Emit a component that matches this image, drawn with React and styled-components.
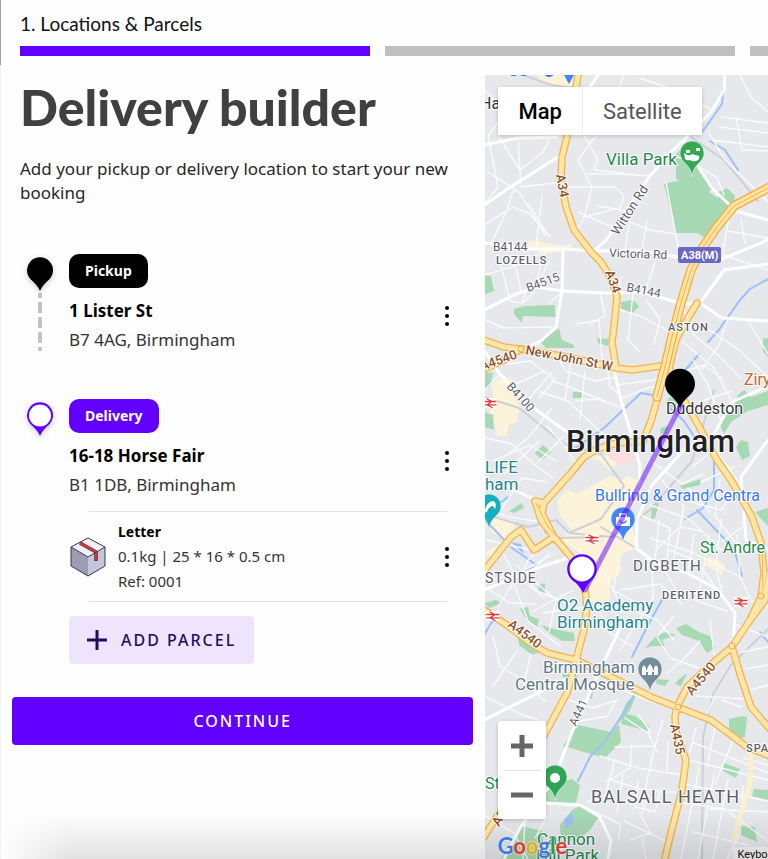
import React, { useState } from "react";
import styled, { createGlobalStyle } from "styled-components";

const GlobalStyle = createGlobalStyle`
    * {
        box-sizing: border-box;
    }
    body {
        margin: 0;
        background: #fefefe;
        color: #101010;
        font-family: "Noto Sans", "Open Sans", sans-serif;
        overflow-x: hidden;
    }
    button {
        font: inherit;
        cursor: pointer;
        border: 0;
    }
    h1, h2, h3, p, ul, ol {
        margin: 0;
        padding: 0;
    }
`;

const roads = {
    // drawn wide, with an orange casing
    primary: [
        "M579 70 L573 105 L567 137 L562 157 L561 180 L566 207 L574 230 L591 252 L601 262 L612 280 L617 297 L614 327 L612 342 L616 368 L632 370 L661 366",
        "M484 340 L504 347 L521 349 L567 357 L616 368",
        "M484 369 L502 361 L521 349",
        "M697 303 L685 323 L676 340 L669 368 L684 400 L701 430 L717 460 L731 480 L752 517 L761 543 L764 573 L761 597 L750 620 L732 647 L714 662 L687 687 L677 707",
        "M658 397 L651 421 L643 441 L617 443 L597 449 L584 457 L571 473 L544 503 L535 501 L541 520 L554 537 L571 557 L584 580 L587 607 L584 630 L576 660 L567 693 L547 730 L520 780 L484 837",
        "M544 503 L542 514 L554 537 L534 550 L521 530 L511 537 L484 571",
        "M484 610 L507 625 L529 642 L547 653 L576 660 L607 675 L651 697 L677 707 L711 720 L747 747 L770 756",
        "M732 647 L741 677 L751 707 L770 729",
        "M677 707 L675 717 L676 732 L686 760 L682 790 L671 833 L664 862",
        "M770 573 L765 600 L748 623 L732 647",
    ],
    motorway: [
        "M770 187 L751 197 L734 206 L717 227 L701 250 L691 270 L681 303 L672 337 L665 367 L657 397",
    ],
    secondary: [
        "M600 72 L588 90 L569 106",
        "M725 72 L724 90 L712 111 L684 140 L669 154 L650 176 L624 214 L607 239 L594 251 L566 249 L526 249 L486 243",
        "M684 140 L697 165 L712 188 L736 211 L768 220",
        "M594 251 L636 250 L683 258 L720 260 L768 240",
        "M768 264 L724 270 L700 303 L722 318 L768 321",
        "M484 310 L514 295 L536 287 L562 291 L563 249",
        "M562 291 L605 293 L641 292 L683 304 L698 303",
        "M562 291 L556 327 L541 341 L523 349",
        "M484 350 L499 373 L524 401 L568 433",
        "M614 370 L621 400 L630 430 L640 466 L639 486",
        "M768 386 L732 402 L714 434 L684 450 L652 485 L637 520 L636 548 L654 562 L689 574 L717 589 L735 613 L733 650",
        "M768 440 L741 477 L746 540 L768 549",
        "M620 628 L592 688 L573 730 L553 781 L520 828 L504 859",
        "M484 720 L516 704 L572 676",
        "M545 803 L580 805 L600 817 L611 841 L608 859",
        "M484 590 L537 568 L571 557",
        "M484 490 L506 486 L536 500",
        "M484 205 L512 186 L558 157",
        "M484 145 L518 138 L557 137",
    ],
    minor: [
        "M485 90 L505 113 L488 136 L498 187 L485 203",
        "M518 138 L521 187 L556 183 M488 172 L520 193 L545 235",
        "M499 137 L520 170 L543 152 L552 133 M514 188 L507 210 L492 242",
        "M584 135 L598 160 L594 170 L623 173 M595 137 L578 160 L592 187 L584 218",
        "M569 187 L615 187 L624 196 L620 208 L583 217 M588 174 L624 174 L650 176",
        "M624 72 L616 101 L631 111 L653 112 M639 78 L681 92 L712 110",
        "M722 117 L768 123 M719 127 L768 133 M712 140 L768 147 M736 116 L742 150 L768 151",
        "M738 72 L752 98 L768 112 M709 133 L725 160 L768 202 M665 154 L689 160 L717 178 L724 195",
        "M484 225 L513 207 L530 214 L550 237 M528 203 L548 235 M542 195 L536 249",
        "M578 212 L612 227 L608 238 M584 220 L574 231 M627 221 L650 230 L676 234",
        "M630 217 L625 251 M647 221 L642 251 M666 182 L678 247 M597 206 L605 207 L626 211",
        "M730 211 L722 258 M741 219 L745 244 M703 248 L768 270 M727 231 L768 238",
        "M501 265 L510 301 L522 303 L527 287 M515 262 L521 291 M545 251 L535 286",
        "M484 275 L512 267 L542 253 M549 262 L536 286 M484 319 L503 328 L552 327",
        "M524 302 L534 293 M549 303 L565 290 M600 292 L605 315 L589 325 M576 324 L599 320 L603 368",
        "M621 277 L618 296 M633 294 L628 340 L640 352 M646 300 L660 319 L654 345 M618 309 L640 316 L667 330",
        "M655 262 L647 286 L650 294 M682 304 L693 334 L718 355 L742 379 M700 323 L740 351 L768 377",
        "M727 321 L719 345 L702 369 M748 321 L768 354 M683 342 L714 368 L731 400",
        "M553 350 L566 371 L596 381 L615 377 M571 360 L565 401 M585 371 L580 420 M551 380 L605 401",
        "M508 364 L530 361 L555 379 L540 397 M511 386 L545 371 M499 375 L485 390",
        "M540 392 L568 401 L606 437 M526 402 L552 372 M576 401 L597 399 L620 407",
        "M617 385 L660 379 M622 398 L650 387 L665 388 M607 368 L610 386 L620 395",
        "M693 360 L708 385 L721 421 M680 373 L704 365 L723 379 M699 402 L732 391",
        "M485 438 L512 444 L535 465 L553 478 M493 461 L530 445 L556 461 M504 474 L539 441",
        "M547 426 L567 449 L576 464 M552 408 L528 438 L504 457 M564 436 L539 461",
        "M485 510 L510 517 L547 523 M501 510 L522 478 L546 482 M550 540 L528 560 L520 580",
        "M486 540 L508 545 L527 549 M500 548 L514 573 L544 598 M516 565 L556 600 L549 632",
        "M550 553 L527 575 L535 590 L561 601 M484 582 L519 573 L550 556 M573 590 L533 611",
        "M514 584 L528 621 L560 646 M488 589 L510 603 L535 604 M498 607 L515 580 M543 613 L585 607",
        "M648 459 L682 484 L703 474 M662 480 L684 507 L676 548 M680 499 L721 510 L743 481",
        "M692 467 L715 449 L742 487 M701 482 L734 467 M688 488 L710 512 M720 479 L715 516 L738 546",
        "M642 516 L670 528 L667 564 M650 505 L689 519 L725 553 M656 550 L680 527 L701 531",
        "M679 533 L672 568 M694 534 L688 572 M709 535 L702 577 M650 538 L694 553 L740 577",
        "M659 520 L655 562 M670 550 L696 561 L725 600 M721 519 L716 568 L722 592 M745 525 L723 541",
        "M737 535 L740 577 L752 602 M703 578 L695 600 L727 611 M620 559 L613 590 L644 607",
        "M604 571 L622 609 M620 590 L660 584 L682 604 M596 603 L610 633 L633 647",
        "M652 566 L653 598 L635 625 L620 651 M665 571 L677 591 L710 595 M637 612 L657 620 L674 640",
        "M673 617 L657 637 L670 658 L699 668 M700 641 L682 661 L667 673 M710 620 L714 654",
        "M737 625 L768 637 M742 652 L768 647 M746 669 L768 665 M751 690 L768 685 M754 601 L768 607",
        "M493 636 L500 666 L524 681 M517 651 L493 686 M531 654 L524 682 L546 702 M485 696 L520 714 L549 724",
        "M605 684 L622 690 L655 703 M616 700 L608 716 L575 722 M566 699 L592 708 L618 700",
        "M625 718 L648 733 L658 753 M639 715 L651 733 M663 720 L655 746 L615 747",
        "M600 756 L638 768 L682 775 M632 742 L630 768 L606 782 M615 760 L604 799 L586 802",
        "M654 749 L642 805 M668 741 L667 773 M688 760 L725 769 L768 780 M684 784 L768 801",
        "M696 728 L690 752 M715 727 L707 767 M733 741 L715 784 M743 758 L768 765",
        "M692 742 L768 773 M706 716 L714 698 M722 700 L741 707 M696 696 L746 699",
        "M608 779 L640 789 L681 793 M623 775 L617 813 M638 780 L635 807 L653 811 M585 807 L620 824 L619 841",
        "M648 795 L641 816 L650 832 M660 793 L655 812 M679 802 L725 809 L768 841 M624 821 L668 842",
        "M699 768 L681 859 M714 775 L698 859 M728 779 L713 859 M743 786 L740 833 L727 859",
        "M710 809 L768 812 M693 832 L748 845 M630 840 L653 832 M642 839 L646 859 M525 819 L523 859",
        "M522 752 L552 771 M484 815 L514 833 L528 859 M535 838 L547 817",
    ],
    rail: [
        "M514 72 L552 85 L620 94",
        "M484 397 L519 408 L564 444 L601 454 L624 486 L601 519 L569 533 L556 520 L528 527 L484 514",
        "M601 527 L639 550 M569 533 L612 537 L650 510 L692 461 L714 390",
        "M545 532 L560 538 L600 537",
        "M688 135 L724 160 L758 201",
        "M768 629 L731 665 L713 694 L703 737 L702 859",
    ],
    water: [
        "M725 73 L722 104 L703 131",
        "M710 141 L725 150 L738 170",
        "M768 279 L750 289 L740 300 L718 331 L708 342 M699 354 L682 374",
        "M658 396 L641 393 L623 410 L604 428 L577 447",
        "M668 406 L684 421 L695 438",
        "M484 519 L512 548 L538 566 L514 576",
        "M492 509 L508 497 M714 457 L714 490 L703 508 L685 519 M697 510 L734 549 L742 576",
        "M663 598 L648 625 L632 657 M760 632 L768 642",
        "M634 695 L621 717 L605 741 L590 757 L578 781",
        "M484 635 L493 620",
    ],
};

const parks = [
    "M664 184 L681 180 L700 186 L712 194 L734 208 L717 228 L707 239 L697 233 L676 233 Z",
    "M676 154 L686 145 L697 166 L714 188 L708 192 L676 179 Z",
    "M718 192 L727 188 L735 196 L734 205 L719 202 Z",
    "M514 309 L525 306 L555 305 L555 317 L523 316 L522 323 L514 314 Z",
    "M484 275 L491 276 L494 291 L484 295 Z",
    "M621 302 L633 300 L639 306 L632 314 L621 309 Z",
    "M559 328 L562 340 L574 345 L574 348 L546 348 L540 342 Z",
    "M597 338 L608 339 L608 346 L598 343 Z",
    "M573 392 L583 391 L583 398 L573 398 Z",
    "M535 453 L543 445 L551 452 L542 460 Z",
    "M484 372 L493 373 L490 387 L484 391 Z M484 412 L493 415 L494 430 L484 427 Z",
    "M670 397 L681 401 L683 413 L665 403 Z M661 428 L668 426 L667 439 L660 433 Z",
    "M738 395 L744 390 L751 397 L768 391 L768 405 L748 411 L731 422 L724 434 L720 425 L726 412 L732 411 Z",
    "M763 339 L768 338 L768 357 L763 351 Z",
    "M680 486 L701 479 L700 485 L683 489 Z M652 504 L659 503 L655 518 L651 519 Z",
    "M736 447 L741 440 L748 442 L750 456 L742 460 Z",
    "M755 512 L768 508 L768 526 Z",
    "M509 511 L522 503 L524 508 L514 513 Z M538 585 L545 583 L545 593 L539 591 Z",
    "M520 609 L528 607 L530 616 L539 619 L537 627 L526 619 Z",
    "M541 625 L558 630 L574 633 L575 641 L562 641 L549 633 Z",
    "M517 630 L530 644 L542 651 L532 655 L519 645 Z",
    "M645 648 L657 635 L666 632 L676 635 L662 640 L665 646 L653 646 Z",
    "M676 628 L686 624 L699 632 L710 636 L715 648 L707 653 L699 641 L682 635 Z",
    "M655 679 L669 680 L665 686 L657 684 Z M678 680 L687 673 L681 686 L675 684 Z",
    "M578 725 L611 732 L619 724 L621 742 L605 758 L563 746 Z",
    "M624 713 L635 716 L649 726 L648 731 L621 724 Z",
    "M626 703 L637 693 L630 710 L618 724 Z",
    "M729 719 L742 716 L747 717 L745 737 L737 739 L729 729 Z",
    "M724 763 L740 769 L736 778 L723 771 Z",
    "M545 785 L572 779 L580 785 L576 803 L545 802 Z",
    "M572 810 L580 806 L600 815 L590 830 L576 841 L561 839 L560 825 Z",
    "M522 826 L542 831 L545 859 L501 859 Z",
    "M754 789 L768 790 L768 800 L752 796 Z M738 826 L755 827 L757 842 L741 835 Z",
    "M562 674 L578 676 L577 680 L564 679 Z M586 696 L593 692 L592 699 Z",
    "M484 603 L496 600 L502 603 L489 608 Z",
];

const builtUp = [
    "M539 75 L575 75 L571 88 L551 86 L538 80 Z",
    "M529 240 L563 246 L574 242 L569 250 L546 254 L528 248 Z",
    "M504 375 L515 382 L513 393 L520 407 L516 423 L509 424 L507 436 L497 436 L495 424 L487 419 L494 400 L491 386 Z",
    "M610 476 L622 481 L628 475 L637 480 L635 504 L628 510 L634 535 L640 547 L623 553 L618 562 L622 571 L610 582 L610 601 L587 602 L590 583 L580 553 L562 540 L571 529 L560 515 L557 502 L567 489 L577 494 Z",
    "M488 515 L516 521 L509 541 L491 532 Z M484 553 L497 545 L492 558 Z",
    "M710 556 L725 565 L722 575 L704 564 Z",
    "M591 457 L610 455 L622 461 L609 470 L601 462 Z",
];

const labels = [
    { text: "Villa Park", x: 606, y: 165, size: 17, color: "#23864a" },
    { text: "B4144", x: 493, y: 251, size: 12 },
    { text: "LOZELLS", x: 496, y: 264, size: 11, space: 1, bold: true },
    { text: "B4515", x: 528, y: 292, size: 12, turn: -20 },
    { text: "A34", x: 556, y: 175, size: 13, turn: 80, bold: true, color: "#8a542c" },
    { text: "A34", x: 605, y: 272, size: 13, turn: 70, bold: true, color: "#8a542c" },
    { text: "B4144", x: 626, y: 291, size: 12, turn: 11 },
    { text: "Witton Rd", x: 618, y: 236, size: 13, turn: -57 },
    { text: "Victoria Rd", x: 609, y: 257, size: 12, turn: 2 },
    { text: "ASTON", x: 668, y: 331, size: 11, space: 1, bold: true },
    { text: "New John St W", x: 525, y: 354, size: 13, turn: 11, bold: true, color: "#8a542c" },
    { text: "A4540", x: 482, y: 371, size: 13, turn: -20, bold: true, color: "#8a542c" },
    { text: "B4100", x: 506, y: 387, size: 12, turn: 48 },
    { text: "Ziry", x: 744, y: 385, size: 16, color: "#c6651d" },
    { text: "Duddeston", x: 666, y: 414, size: 16, color: "#333" },
    { text: "LIFE", x: 485, y: 473, size: 17, color: "#24838c" },
    { text: "ham", x: 485, y: 490, size: 17, color: "#24838c" },
    { text: "Bullring & Grand Centra", x: 595, y: 501, size: 16, color: "#3b78e7" },
    { text: "St. Andre", x: 700, y: 553, size: 16, color: "#23864a" },
    { text: "DIGBETH", x: 633, y: 571, size: 15, space: 1 },
    { text: "STSIDE", x: 485, y: 583, size: 14, space: 1 },
    { text: "DERITEND", x: 662, y: 599, size: 11, space: 1, bold: true },
    { text: "O2 Academy", x: 557, y: 611, size: 17, color: "#24838c" },
    { text: "Birmingham", x: 557, y: 628, size: 17, color: "#24838c" },
    { text: "A4540", x: 507, y: 626, size: 13, turn: 37, bold: true, color: "#8a542c" },
    { text: "Birmingham", x: 543, y: 673, size: 17, color: "#607886" },
    { text: "Central Mosque", x: 515, y: 690, size: 17, color: "#607886" },
    { text: "A4540", x: 692, y: 696, size: 13, turn: -50, bold: true, color: "#8a542c" },
    { text: "A441", x: 576, y: 727, size: 12, turn: -65 },
    { text: "A435", x: 670, y: 725, size: 13, turn: 78, bold: true, color: "#8a542c" },
    { text: "SPA", x: 746, y: 752, size: 11, space: 1, bold: true },
    { text: "Sta", x: 485, y: 789, size: 16, color: "#23864a" },
    { text: "A38", x: 499, y: 827, size: 13, turn: -60, bold: true, color: "#8a542c" },
    { text: "BALSALL HEATH", x: 591, y: 803, size: 18, space: 1 },
    { text: "Cannon", x: 537, y: 845, size: 17, color: "#23864a" },
    { text: "Hill Park", x: 536, y: 861, size: 17, color: "#23864a" },
    { text: "Ha", x: 480, y: 109, size: 16, color: "#333" },
];

function RailSign({ x, y }) {
    return (
        <g transform={`translate(${x} ${y})`}>
            <rect x="-7" y="-5" width="14" height="10" rx="1" fill="#fff" />
            <path
                d="M-6 -1.5H6M-6 1.8H6M-3 -4L2 -1.5L-3 1.8L2 4.5"
                fill="none"
                stroke="#df3a3a"
                strokeWidth="1.3"
            />
        </g>
    );
}

function PlacePin({ x, y, color, children }) {
    return (
        <g transform={`translate(${x} ${y})`}>
            <path
                d="M0 22C-1 15 -4 12 -8 8C-11 5 -12 2 -12 -1A12 12 0 0 1 12 -1C12 2 11 5 8 8C4 12 1 15 0 22Z"
                fill={color}
                stroke="#fff"
                strokeOpacity="0.5"
            />
            {children}
        </g>
    );
}

function MapDrawing() {
    return (
        <MapSvg role="img" aria-label="Map of Birmingham">
            <g
                transform="translate(-485 -75)"
                fill="none"
                strokeLinejoin="round"
                strokeLinecap="round"
            >
                <path d={builtUp.join(" ")} fill="#fcf3d8" />
                <path d="M604 446 L636 446 L637 456 L624 467 L610 459 Z" fill="#f8dfdd" />
                <path d={parks.join(" ")} fill="#a7d9b5" />
                <path d={roads.rail.join(" ")} stroke="#cdd0d5" strokeWidth="2" />
                <path d={roads.water.join(" ")} stroke="#9cc0f9" strokeWidth="2" />
                <path
                    d="M572 813 L574 822 L566 828 L564 820 Z M511 542 L521 544 L524 554 Z"
                    fill="#9cc0f9"
                />
                <path
                    d={roads.minor.join(" ")}
                    stroke="#f9fafb"
                    strokeWidth="1.4"
                />
                <path
                    d={roads.secondary.join(" ")}
                    stroke="#fff"
                    strokeWidth="3"
                />
                <path d="M751 752 L750 783 L734 838" stroke="#fcf0cd" strokeWidth="5" />
                <path d={roads.primary.join(" ")} stroke="#f4b44c" strokeWidth="7.6" />
                <path d={roads.primary.join(" ")} stroke="#fee6ab" strokeWidth="5" />
                <path d={roads.motorway[0]} stroke="#f2ac3f" strokeWidth="9.500" />
                <path d={roads.motorway[0]} stroke="#fee3a3" strokeWidth="7" />
                <path d={roads.motorway[0]} stroke="#f4b44c" strokeWidth="1" />
                <path d="M536 503 L548 527 L562 541 M762 545 L763 590" stroke="#f4b44c" />
                {[
                    [521, 349],
                    [678, 707],
                    [732, 646],
                    [761, 596],
                ].map(([cx, cy]) => (
                    <circle
                        key={cx}
                        cx={cx}
                        cy={cy}
                        r="3"
                        fill="#fee6ab"
                        stroke="#f0ac42"
                    />
                ))}

                <RailSign x={490} y={403} />
                <RailSign x={592} y={539} />
                <RailSign x={741} y={602} />
                <RailSign x={493} y={616} />

                <rect x="678" y="247" width="43" height="16" rx="2" fill="#6a68c6" />
                <Badge x="681" y="259">A38(M)</Badge>
                {labels.map((l) => (
                    <MapLabel
                        key={`${l.text}${l.x}`}
                        $size={l.size}
                        $color={l.color}
                        $space={l.space}
                        $bold={l.bold}
                        transform={`translate(${l.x} ${l.y}) rotate(${l.turn || 0})`}
                    >
                        {l.text}
                    </MapLabel>
                ))}
                <MapLabel
                    $size={31}
                    $color="#202124"
                    $bold
                    transform="translate(566 452)"
                >
                    Birmingham
                </MapLabel>
                <path d="M564 75h10l-5 9z" fill="#4285f4" />
                <path
                    d="M512 75h3M522 75h3M546 75q3 2 6 0"
                    stroke="#3b78e7"
                    strokeWidth="2"
                />

                <PlacePin x={692} y={154} color="#34a853">
                    <path
                        d="M-8 -1q5 4 8 1l7 2q1 4 -3 5q-4 1 -6 -1q-4 1 -5 -1zM-6 -4h4v3h-4zM4 -6h4v3h-4z"
                        fill="#fff"
                    />
                </PlacePin>
                <PlacePin x={623} y={520} color="#4285f4">
                    <path d="M-7 -3H7V6H-7Z" fill="#fff" />
                    <path d="M-3 -2V-6H3V-2" stroke="#fff" strokeWidth="2" />
                    <path d="M-3 1Q0 5 3 1" stroke="#4285f4" strokeWidth="1.5" />
                </PlacePin>
                <PlacePin x={489} y={507} color="#14b0bd">
                    <path
                        d="M-4 3Q-2 -6 5 -6Q8 -3 6 2L4 -1Q0 -1 -2 5L-6 6Z"
                        fill="#fff"
                    />
                </PlacePin>
                <PlacePin x={650} y={670} color="#728c9a">
                    <path
                        d="M-8 5V-2l2-3 2 3V0H-3Q-3 -3 0 -6Q3 -3 3 0H4V-2l2-3 2 3V5H4V2H2V5H-2V2H-4V5Z"
                        fill="#fff"
                    />
                </PlacePin>
                <PlacePin x={555} y={778} color="#2fa455">
                    <circle cx="0" cy="0" r="5" fill="#fff" />
                </PlacePin>

                <path
                    d="M681 405 L585 590"
                    stroke="#6200ff"
                    strokeOpacity="0.5"
                    strokeWidth="5"
                />
                <path
                    d="M680 408Q678 402 670 395A15 15 0 1 1 690 395Q682 402 680 408Z"
                    fill="#000"
                />
                <path d="M570 577Q580 586 583 593Q586 586 594 577Z" fill="#6200ff" />
                <circle
                    cx="582"
                    cy="569"
                    r="13.6"
                    fill="#fff"
                    stroke="#6200ff"
                    strokeWidth="2.4"
                />
            </g>
        </MapSvg>
    );
}

function StopPin({ outlined }) {
    return (
        <Pin width="30" height="37" viewBox="0 0 30 37" aria-hidden="true">
            <path
                d="M15 35Q13 30 7 24.500A13 13 0 1 1 23 24.500Q17 30 15 35Z"
                fill={outlined ? "#6200ff" : "#000"}
            />
            {outlined && <circle cx="15" cy="14.500" r="11" fill="#fff" />}
        </Pin>
    );
}

function ParcelIcon() {
    return (
        <svg width="38" height="42" viewBox="0 0 38 42" aria-hidden="true">
            <g strokeLinejoin="round">
                <path d="M2 11L19 21V40L2 30Z" fill="#9c9cb4" />
                <path d="M36 11L19 21V40L36 30Z" fill="#c5c5dc" />
                <path d="M19 2L36 11L19 21L2 11Z" fill="#f0f0f2" />
                <path
                    d="M11 7L27 16V25"
                    fill="none"
                    stroke="#4c2634"
                    strokeWidth="3.5"
                />
                <path
                    d="M11 7L27 16V24.500"
                    fill="none"
                    stroke="#d33b40"
                    strokeWidth="2.2"
                />
                <path
                    d="M19 2L36 11V30L19 40L2 30V11ZM2 11L19 21L36 11"
                    fill="none"
                    stroke="#3b3558"
                />
            </g>
        </svg>
    );
}

function MoreButton({ label }) {
    return (
        <Kebab type="button" aria-label={label}>
            <svg width="6" height="22" viewBox="0 0 6 22" aria-hidden="true">
                <circle cx="3" cy="3" r="2" />
                <circle cx="3" cy="11" r="2" />
                <circle cx="3" cy="19" r="2" />
            </svg>
        </Kebab>
    );
}

const stops = [
    { type: "Pickup", street: "1 Lister St", area: "B7 4AG, Birmingham" },
    { type: "Delivery", street: "16-18 Horse Fair", area: "B1 1DB, Birmingham" },
];

function App() {
    const [mapType, setMapType] = useState("Map");

    return (
        <Page>
            <GlobalStyle />
            <Header>
                <StepTitle>1. Locations &amp; Parcels</StepTitle>
                <Steps>
                    <Step $active />
                    <Step />
                    <Step />
                </Steps>
            </Header>
            <Main>
                <Builder>
                    <Content>
                        <Title>Delivery builder</Title>
                        <Intro>
                            Add your pickup or delivery location to start your new
                            booking
                        </Intro>
                        <Stops>
                            {stops.map(({ type, street, area }) => (
                                <Stop key={type}>
                                    <Track>
                                        <StopPin outlined={type === "Delivery"} />
                                        {type === "Pickup" && (
                                            <svg width="4" height="58" aria-hidden="true">
                                                <path
                                                    d="M2 0V58"
                                                    stroke="#c4c4c4"
                                                    strokeWidth="4"
                                                    strokeDasharray="11 4"
                                                    strokeDashoffset="6"
                                                />
                                            </svg>
                                        )}
                                    </Track>
                                    <div>
                                        <Tag $purple={type === "Delivery"}>{type}</Tag>
                                        <Street>{street}</Street>
                                        <Area>{area}</Area>
                                    </div>
                                    <MoreButton label={`${type} options`} />
                                </Stop>
                            ))}
                        </Stops>
                        <Parcels>
                            <Parcel>
                                <ParcelIcon />
                                <ParcelText>
                                    <ParcelName>Letter</ParcelName>
                                    <p>0.1kg | 25 * 16 * 0.5 cm</p>
                                    <p>Ref: 0001</p>
                                </ParcelText>
                                <MoreButton label="Parcel options" />
                            </Parcel>
                            <AddParcel type="button">
                                <svg width="20" height="20" viewBox="0 0 20 20" aria-hidden="true">
                                    <path
                                        d="M10 0V20M0 10H20"
                                        stroke="currentColor"
                                        strokeWidth="3"
                                    />
                                </svg>
                                ADD PARCEL
                            </AddParcel>
                        </Parcels>
                    </Content>
                    <Continue type="button">CONTINUE</Continue>
                </Builder>
                <MapPanel>
                    <MapDrawing />
                    <MapTypes>
                        {["Map", "Satellite"].map((name) => (
                            <MapType
                                key={name}
                                type="button"
                                $selected={mapType === name}
                                onClick={() => setMapType(name)}
                            >
                                {name}
                            </MapType>
                        ))}
                    </MapTypes>
                    <Zoom>
                        <ZoomButton type="button" aria-label="Zoom in">
                            <svg width="22" height="22" viewBox="0 0 22 22">
                                <path d="M11 0V22M0 11H22" stroke="#666" strokeWidth="5" />
                            </svg>
                        </ZoomButton>
                        <ZoomButton type="button" aria-label="Zoom out">
                            <svg width="22" height="22" viewBox="0 0 22 22">
                                <path d="M0 11H22" stroke="#666" strokeWidth="5" />
                            </svg>
                        </ZoomButton>
                    </Zoom>
                    <Google>
                        <Letter $color="#4285f4">G</Letter>
                        <Letter $color="#ea4335">o</Letter>
                        <Letter $color="#fbbc05">o</Letter>
                        <Letter $color="#4285f4">g</Letter>
                        <Letter $color="#34a853">l</Letter>
                        <Letter $color="#ea4335">e</Letter>
                    </Google>
                    <Shortcuts type="button">Keyboard shortcuts</Shortcuts>
                </MapPanel>
            </Main>
            <Shade />
        </Page>
    );
}

const Page = styled.div`
    position: relative;
    display: flex;
    flex-direction: column;
    min-height: 100vh;
    overflow: hidden;
`;

const Header = styled.header`
    height: 65px;
    padding: 12px 0 0 19px;
    border-left: 1px solid #a79bc8;
    overflow: hidden;
`;

const StepTitle = styled.h2`
    font-family: Lato, sans-serif;
    font-size: 19px;
    font-weight: 400;
    line-height: 24px;
`;

const Steps = styled.div`
    display: flex;
    gap: 15px;
    margin-top: 10px;
`;

const Step = styled.div`
    flex: 1 0 350px;
    height: 10px;
    background: ${({ $active }) => ($active ? "#6200ff" : "#bfbfbf")};
`;

const Main = styled.main`
    flex: 1;
    display: grid;
    grid-template-columns: minmax(0, 12fr) minmax(0, 7fr);
    padding-top: 10px;
    border-left: 1px solid #f3f3f5;
`;

const Builder = styled.section`
    padding: 0 12px 40px 11px;
`;

const Content = styled.div`
    padding: 4px 14px 0 8px;
`;

const Title = styled.h1`
    font-family: Lato, sans-serif;
    font-size: 50px;
    font-weight: 900;
    line-height: 56px;
    color: #404040;
`;

const Intro = styled.p`
    margin-top: 22px;
    font-size: 17px;
    line-height: 24px;
    color: #262626;
`;

const Stops = styled.ol`
    display: flex;
    flex-direction: column;
    gap: 45px;
    margin-top: 49px;
    list-style: none;
`;

const Stop = styled.li`
    display: grid;
    grid-template-columns: 40px 1fr 24px;
    column-gap: 9px;
    align-items: start;

    > button {
        align-self: start;
        margin-top: 50px;
    }
`;

const Track = styled.div`
    display: flex;
    flex-direction: column;
    align-items: center;
    padding-top: 2px;
`;

const Pin = styled.svg`
    filter: drop-shadow(0 2px 3px rgba(0, 0, 0, 0.2));
`;

const Tag = styled.span`
    display: inline-block;
    padding: 0 16px;
    border-radius: 10px;
    background: ${({ $purple }) => ($purple ? "#6200ff" : "#000")};
    color: #fff;
    font-size: 14px;
    font-weight: 700;
    line-height: 34px;
    vertical-align: top;
`;

const Street = styled.h3`
    margin-top: 8px;
    font-size: 17px;
    font-weight: 700;
    line-height: 29px;
    color: #000;
`;

const Area = styled.p`
    font-size: 17px;
    line-height: 29px;
    color: #333;
`;

const Kebab = styled.button`
    display: flex;
    align-items: center;
    justify-content: center;
    width: 24px;
    height: 24px;
    padding: 0;
    background: none;
`;

const Parcels = styled.div`
    margin: 12px 0 0 49px;
`;

const Parcel = styled.div`
    display: grid;
    grid-template-columns: 38px 1fr 24px;
    column-gap: 11px;
    align-items: center;
    padding: 8px 0;
    background:
        linear-gradient(#e2e2e4, #e2e2e4) 20px 0 / calc(100% - 32px) 1px no-repeat,
        linear-gradient(#e2e2e4, #e2e2e4) 20px 100% / calc(100% - 32px) 1px no-repeat;
`;

const ParcelText = styled.div`
    font-size: 15px;
    line-height: 25px;
    color: #333;
`;

const ParcelName = styled.h3`
    font-size: 14px;
    color: #000;
`;

const AddParcel = styled.button`
    display: flex;
    align-items: center;
    gap: 14px;
    height: 48px;
    margin-top: 14px;
    padding: 0 18px;
    border-radius: 4px;
    background: #eee4fd;
    color: #280a5c;
    font-size: 16px;
    font-weight: 500;
    letter-spacing: 2px;
`;

const Continue = styled.button`
    width: 100%;
    height: 48px;
    margin-top: 33px;
    border-radius: 4px;
    background: #6200ff;
    color: #fff;
    font-size: 16px;
    font-weight: 500;
    letter-spacing: 2px;
`;

const MapPanel = styled.section`
    position: relative;
    overflow: hidden;
    background: #e6e8ec;
    font-family: Roboto, sans-serif;
`;

const MapSvg = styled.svg`
    position: absolute;
    width: 100%;
    height: 100%;
`;

const MapLabel = styled.text`
    font-family: Roboto, sans-serif;
    font-size: ${({ $size }) => $size}px;
    font-weight: ${({ $bold }) => ($bold ? 500 : 400)};
    letter-spacing: ${({ $space }) => $space || 0}px;
    fill: ${({ $color }) => $color || "#5c6066"};
    stroke: #fff;
    stroke-width: 2px;
    paint-order: stroke;
`;

const Badge = styled.text`
    font-family: Roboto, sans-serif;
    font-size: 11px;
    font-weight: 700;
    fill: #fff;
`;

const MapTypes = styled.div`
    position: absolute;
    top: 12px;
    left: 13px;
    display: flex;
    background: #fff;
    box-shadow: 0 1px 4px rgba(0, 0, 0, 0.2);
`;

const MapType = styled.button`
    height: 48px;
    padding: 0 20px;
    background: none;
    color: ${({ $selected }) => ($selected ? "#000" : "#565656")};
    font-size: 22px;
    font-weight: ${({ $selected }) => ($selected ? 500 : 400)};

    & + & {
        border-left: 1px solid #ececec;
    }
`;

const Zoom = styled.div`
    position: absolute;
    bottom: 40px;
    left: 13px;
    display: flex;
    flex-direction: column;
    padding: 0 5px;
    border-radius: 2px;
    background: #fff;
    box-shadow: 0 1px 4px rgba(0, 0, 0, 0.2);
`;

const ZoomButton = styled.button`
    display: flex;
    align-items: center;
    justify-content: center;
    width: 38px;
    height: 49px;
    padding: 0;
    background: none;

    & + & {
        border-top: 1px solid #e4e4e4;
    }
`;

const Google = styled.div`
    position: absolute;
    bottom: 0;
    left: 12px;
    font-family: Lato, sans-serif;
    font-size: 22px;
    line-height: 26px;
    text-shadow: 0 0 2px #fff, 0 0 2px #fff;
`;

const Letter = styled.span`
    color: ${({ $color }) => $color};
    font-weight: 700;
`;

const Shortcuts = styled.button`
    position: absolute;
    bottom: -4px;
    left: 248px;
    padding: 0 4px;
    background: #f5f5f5;
    color: #111;
    font-size: 11px;
    line-height: 16px;
    white-space: nowrap;
`;

const Shade = styled.div`
    position: absolute;
    right: 0;
    bottom: 0;
    left: 0;
    height: 46px;
    background: linear-gradient(rgba(0, 0, 0, 0), rgba(0, 0, 0, 0.11));
    mask-image: linear-gradient(to right, transparent, #000 70px);
    pointer-events: none;
`;

export default App;
